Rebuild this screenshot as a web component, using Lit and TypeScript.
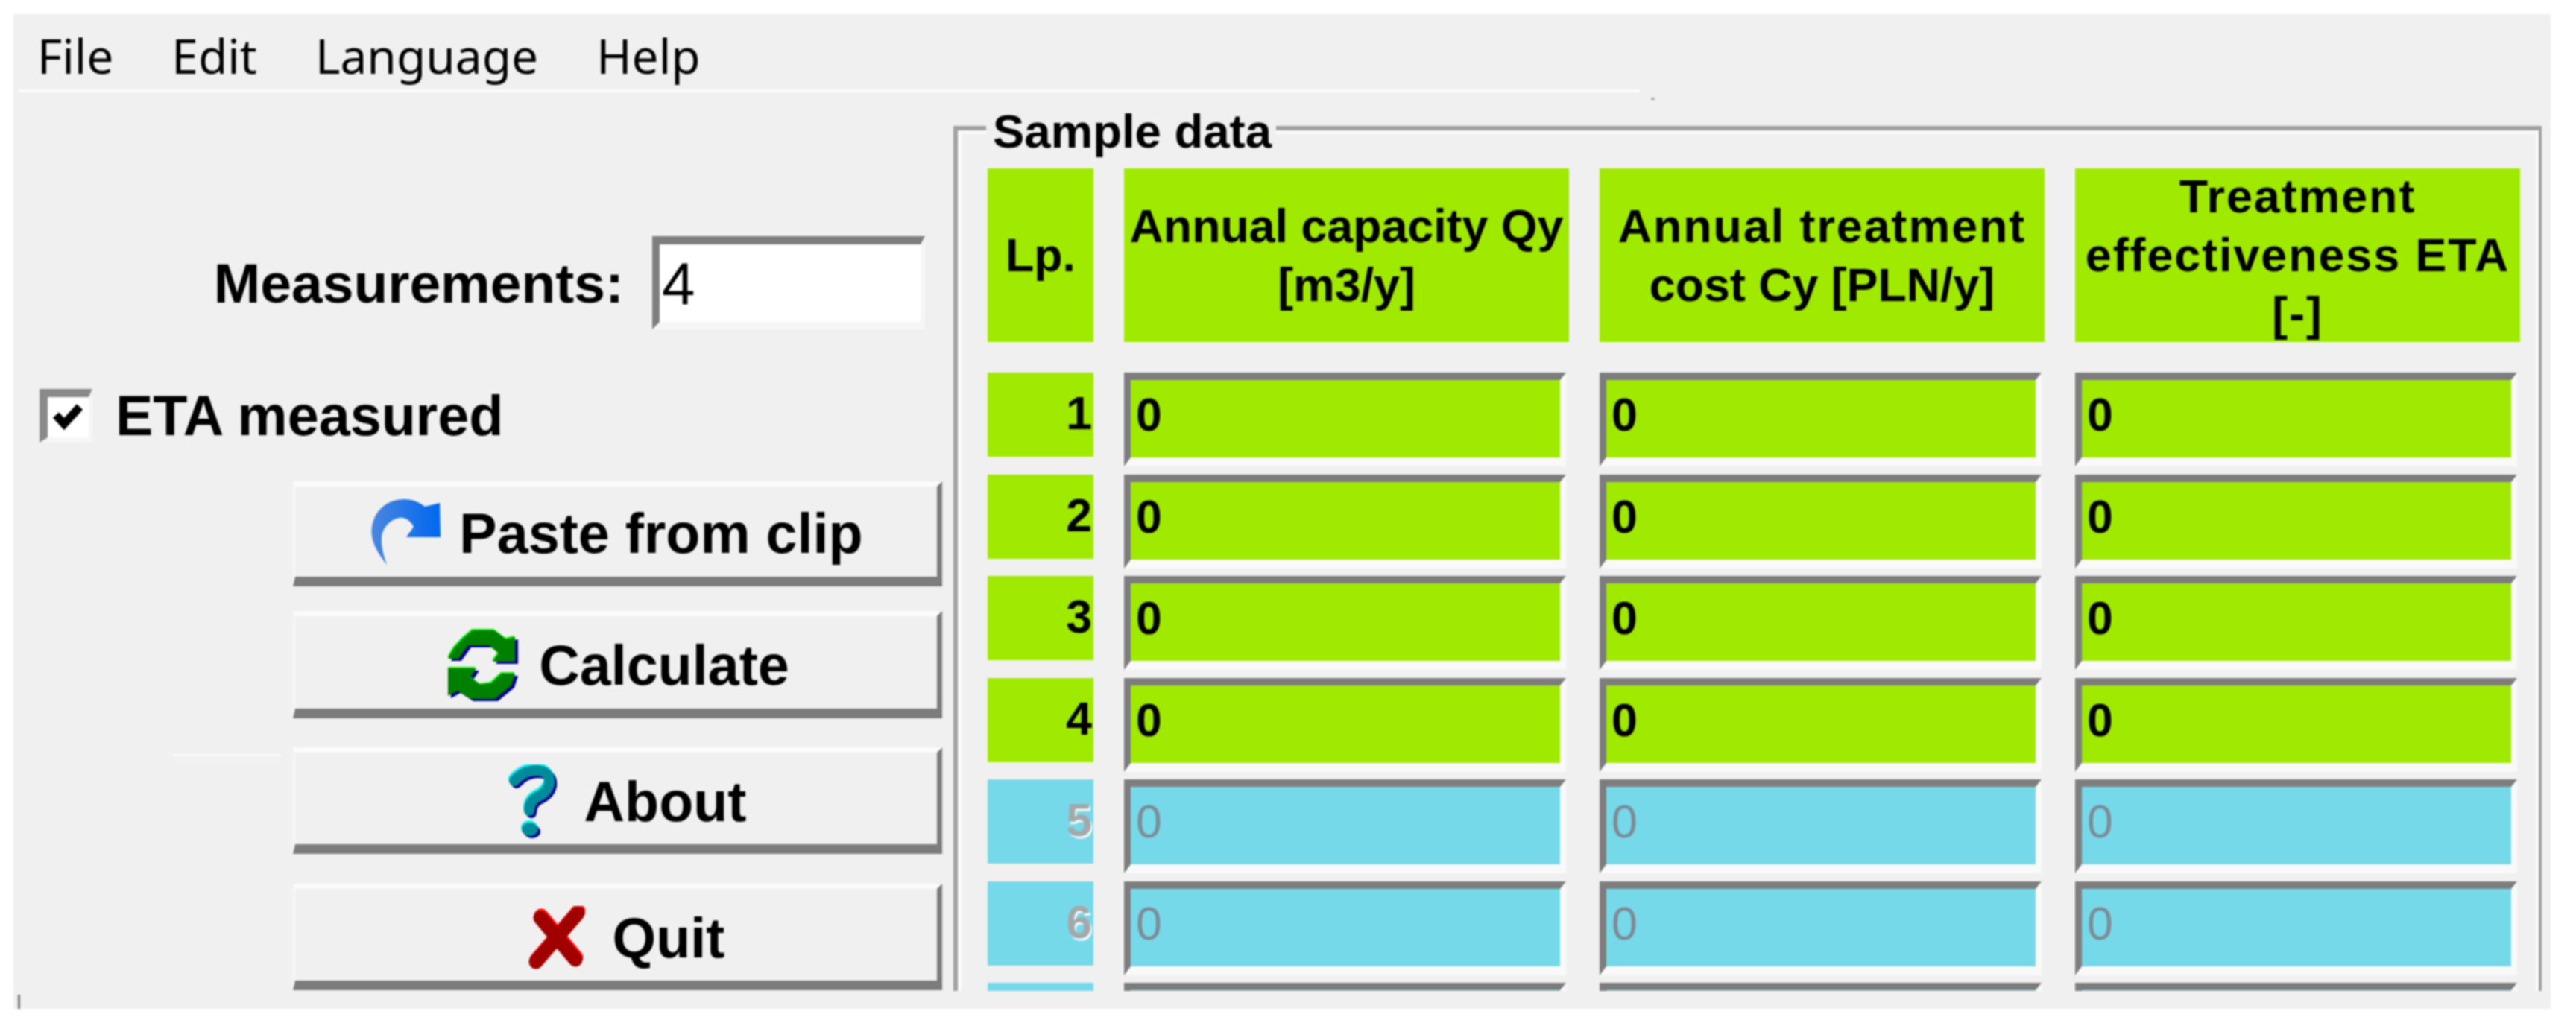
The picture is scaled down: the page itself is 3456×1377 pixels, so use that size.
import { LitElement, html, css, svg } from "lit";
import { customElement } from "lit/decorators.js";

const ROWS = [1, 2, 3, 4, 5, 6];
const ACTIVE = 4;

@customElement("app-root")
export class AppRoot extends LitElement {
  static styles = css`
    :host { display: block; width: 3456px; height: 1377px; background: #fff; overflow: hidden; font-family: "Liberation Sans", Arial, sans-serif; color: #000; }
    .page { padding: 19px 34px 23px 18px; height: 1377px; box-sizing: border-box; }
    .window { position: relative; background: #f0f0f0; height: 1335px; filter: blur(1.1px); }
    .menu { display: flex; gap: 78px; margin-left: 7px; width: 2175px; height: 105px; box-sizing: border-box; padding: 20px 0 0 25px; border-bottom: 4px solid #fbfbfb; font-family: "Noto Sans", sans-serif; font-size: 64px; line-height: 72px; }
    .body { display: flex; align-items: flex-start; }
    .left { width: 1261px; flex: none; font-weight: 700; font-size: 75.5px; }
    .measure { display: flex; justify-content: flex-end; align-items: center; gap: 38px; margin-top: 193px; padding-right: 38px; font-size: 75px; }
    .count { width: 366px; height: 125px; box-sizing: border-box; border-style: solid; border-width: 11px 6px 10px 10px; border-color: #7e7e7e #f6f6f6 #f6f6f6 #7e7e7e; background: #fff; font: 400 80px/105px "Liberation Sans", sans-serif; padding-left: 3px; }
    .eta { display: flex; align-items: center; gap: 31px; margin: 80px 0 0 35px; height: 72px; }
    .check { width: 71px; height: 72px; box-sizing: border-box; border-style: solid; border-width: 11px 5px 7px 11px; border-color: #8a8a8a #f6f6f6 #f6f6f6 #8a8a8a; background: #fff; display: flex; align-items: center; justify-content: center; padding: 0 1px 0 0; }
    .btn { display: flex; align-items: center; justify-content: center; width: 871px; margin-left: 375px; box-sizing: border-box; background: #f0f0f0; border-style: solid; border-width: 7px 7px 13px 3px; border-color: #fbfbfb #7c7c7c #7c7c7c #f7f7f7; }
    .paste { margin-top: 52px; height: 141px; gap: 25px; padding: 4px 0 0 3px; }
    .paste svg { margin-top: -4px; }
    .calc { margin-top: 33px; height: 144px; gap: 23px; padding: 8px 0 0 7px; }
    .about { margin-top: 39px; height: 143px; gap: 35px; padding: 8px 0 0 31px; }
    .quit { margin-top: 40px; height: 143px; gap: 37px; padding: 8px 0 0 27px; }
    .group { position: relative; margin-top: 45px; width: 2131px; height: 1161px; box-sizing: border-box; border-style: solid; border-width: 6px 4px 0 6px; border-color: #a0a0a0; box-shadow: inset 5px 5px 0 #fbfbfb, inset -4px 0 0 #fbfbfb; padding: 51px 0 0 40px; }
    .legend { position: absolute; left: 38px; top: -30px; background: #f0f0f0; padding: 0 6px 0 9px; font-weight: 700; font-size: 63.5px; line-height: 62px; }
    .clip { height: 1104px; overflow: hidden; }
    .grid { display: grid; grid-template-columns: 142px 597px 597px 597px; grid-template-rows: 263.5px; column-gap: 41px; row-gap: 10.5px; grid-auto-rows: 126px; font-size: 62.7px; font-weight: 700; }
    .head { background: #a0e900; height: 233px; display: flex; align-items: center; justify-content: center; text-align: center; line-height: 79px; white-space: nowrap; }
    .wide { letter-spacing: 2px; }
    .num { height: 113px; line-height: 109px; text-align: right; padding-right: 2px; box-sizing: border-box; background: #a0e900; }
    .cell { width: 593px; height: 126px; box-sizing: border-box; border-style: solid; border-width: 10px 8px 12px 9px; border-color: #7d7d7d #f9f9f9 #f9f9f9 #7d7d7d; background: #a0e900; line-height: 92px; padding-left: 7px; }
    .off.num { background: #76d9ea; color: #a3a9ab; text-shadow: 2px 3px 0 #f4fbfd; }
    .off.cell { background: #76d9ea; color: #7d8b95; font-weight: 400; }
    .mark { position: absolute; }
    .m1 { left: 214px; top: 993px; width: 145px; height: 3px; background: #fafafa; }
    .m2 { left: 6px; top: 1316px; width: 3px; height: 19px; background: #777; }
    .m3 { left: 2197px; top: 112px; width: 5px; height: 3px; background: #aaa; }
    svg { flex: none; display: block; }
  `;

  private paste() {
    return html`<svg width="93" height="89" viewBox="0 0 93 89">
      <defs><linearGradient id="pg" x1="0" y1="0" x2="1" y2="0"><stop offset="0" stop-color="#4a86e0"></stop><stop offset="1" stop-color="#0068f0"></stop></linearGradient></defs>
      <path fill="url(#pg)" d="M21 89 C8 72 -2 56 1 38 C4 16 22 1 44 1 C55 1 65 5 72 11 L92 6 L93 52 L47 52 L57 38 C52 29 45 25 38 26 C25 28 15 40 14 52 C13 65 17 78 21 89 Z"></path>
    </svg>`;
  }

  private calc() {
    const a = "M0 40 L8 26 L20 13 L33 2 L62 2 L78 14 L90 11 L90 44 L60 44 L68 33 L55 22 L27 22 L14 40 Z";
    const b = "M0 53 L38 53 L30 65 L43 75 L58 73 L72 60 L90 60 L85 76 L63 94 L30 94 L13 83 L0 90 Z";
    return html`<svg width="99" height="98" viewBox="0 0 99 98">${svg`
      <g fill="#000090" transform="translate(4 3)"><path d=${a}></path><path d=${b}></path></g>
      <g fill="#00f000" transform="translate(-1 -2)"><path d=${a}></path><path d=${b}></path></g>
      <g fill="#008000"><path d=${a}></path><path d=${b}></path></g>`}</svg>`;
  }

  private about() {
    const q = "M8 22 Q20 8 38 8 Q57 9 55 26 Q52 38 38 44 Q28 50 28 62";
    const layer = (col: string, t: string) => svg`<g transform=${t}>
      <path d=${q} fill="none" stroke=${col} stroke-width="14" stroke-linecap="round" stroke-linejoin="round"></path>
      <ellipse cx="29" cy="87" rx="11" ry="9" fill=${col}></ellipse></g>`;
    return html`<svg width="66" height="100" viewBox="0 0 66 100">${layer("#000090", "translate(3 3)")}${layer("#00f4f4", "translate(-1 -3)")}${layer("#008b9b", "translate(0 0)")}</svg>`;
  }

  private quit() {
    const layer = (col: string, t: string) => svg`<g transform=${t} fill="none" stroke=${col} stroke-width="19" stroke-linecap="round">
      <path d="M17 15 L64 71"></path><path d="M67 9 L11 74"></path></g>`;
    return html`<svg width="77" height="85" viewBox="0 0 77 85">${layer("#ff0000", "translate(1 -2)")}${layer("#a00000", "translate(0 1)")}</svg>`;
  }

  render() {
    return html`<div class="page"><div class="window">
      <div class="menu"><span>File</span><span>Edit</span><span>Language</span><span>Help</span></div>
      <div class="body">
        <div class="left">
          <div class="measure"><span>Measurements:</span><div class="count">4</div></div>
          <div class="eta">
            <div class="check"><svg width="42" height="38" viewBox="0 0 42 38"><path d="M5 16 L16 28 L37 5" fill="none" stroke="#000" stroke-width="11"></path></svg></div>
            <span>ETA measured</span>
          </div>
          <div class="btn paste">${this.paste()}<span>Paste from clip</span></div>
          <div class="btn calc">${this.calc()}<span>Calculate</span></div>
          <div class="btn about">${this.about()}<span>About</span></div>
          <div class="btn quit">${this.quit()}<span>Quit</span></div>
        </div>
        <div class="group">
          <div class="legend">Sample data</div>
          <div class="clip"><div class="grid">
            <div class="head">Lp.</div>
            <div class="head">Annual capacity Qy<br />[m3/y]</div>
            <div class="head"><span><span class="wide">Annual treatment</span><br />cost Cy [PLN/y]</span></div>
            <div class="head wide">Treatment<br />effectiveness ETA<br />[-]</div>
            ${ROWS.map((r) => {
              const off = r > ACTIVE ? "off" : "";
              return html`<div class="num ${off}">${r}</div>
                <div class="cell ${off}">0</div><div class="cell ${off}">0</div><div class="cell ${off}">0</div>`;
            })}
            <div class="num off"></div><div class="cell off"></div><div class="cell off"></div><div class="cell off"></div>
          </div></div>
        </div>
      </div>
      <div class="mark m1"></div><div class="mark m2"></div><div class="mark m3"></div>
    </div></div>`;
  }
}
